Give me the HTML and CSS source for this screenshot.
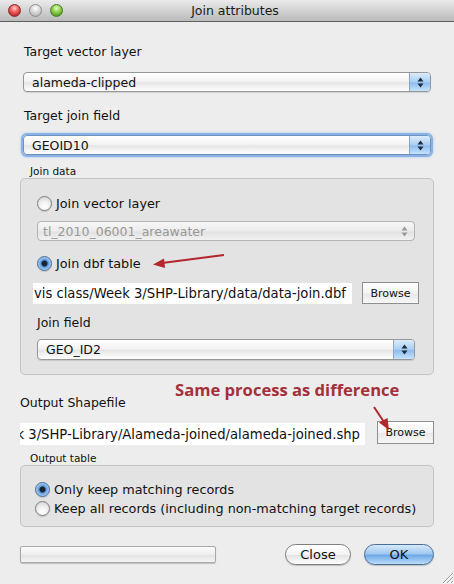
FILE: index.html
```html
<!DOCTYPE html>
<html>
<head>
<meta charset="utf-8">
<link rel="stylesheet" href="styles.css">
</head>
<body>
<div class="window">
  <div class="titlebar">
    <div class="lights">
      <span class="light red"></span>
      <span class="light grey"></span>
      <span class="light green"></span>
    </div>
    <div class="title">Join attributes</div>
    <div></div>
  </div>

  <div class="content">
    <div class="label">Target vector layer</div>
    <div class="combo c1">
      <span class="combo-text">alameda-clipped</span>
      <span class="stepper"><svg width="7" height="11" viewBox="0 0 7 11"><path d="M3.5 0.5 L6.5 4.5 L0.5 4.5Z M3.5 10.5 L6.5 6.5 L0.5 6.5Z" fill="#1d2a3a"/></svg></span>
    </div>

    <div class="label l2">Target join field</div>
    <div class="combo c2 focused">
      <span class="combo-text">GEOID10</span>
      <span class="stepper"><svg width="7" height="11" viewBox="0 0 7 11"><path d="M3.5 0.5 L6.5 4.5 L0.5 4.5Z M3.5 10.5 L6.5 6.5 L0.5 6.5Z" fill="#1d2a3a"/></svg></span>
    </div>

    <div class="small-label sl1">Join data</div>
    <div class="group g1">
      <div class="radio-row r1"><span class="radio"></span><span>Join vector layer</span></div>
      <div class="combo inner disabled">
        <span class="combo-text">tl_2010_06001_areawater</span>
        <span class="stepper"><svg width="7" height="11" viewBox="0 0 7 11"><path d="M3.5 0.5 L6.5 4.5 L0.5 4.5Z M3.5 10.5 L6.5 6.5 L0.5 6.5Z" fill="#9a9a9a"/></svg></span>
      </div>
      <div class="radio-row r2"><span class="radio on"></span><span>Join dbf table</span></div>
      <div class="file-row fr1">
        <div class="field f1"><span>vis class/Week 3/SHP-Library/data/data-join.dbf</span></div>
        <div class="button b1">Browse</div>
      </div>
      <div class="label inner-label">Join field</div>
      <div class="combo inner c3">
        <span class="combo-text">GEO_ID2</span>
        <span class="stepper"><svg width="7" height="11" viewBox="0 0 7 11"><path d="M3.5 0.5 L6.5 4.5 L0.5 4.5Z M3.5 10.5 L6.5 6.5 L0.5 6.5Z" fill="#1d2a3a"/></svg></span>
      </div>
    </div>

    <div class="label out-label">Output Shapefile</div>
    <div class="file-row fr2">
      <div class="field f2"><span>k 3/SHP-Library/Alameda-joined/alameda-joined.shp</span></div>
      <div class="button b2">Browse</div>
    </div>

    <div class="small-label sl2">Output table</div>
    <div class="group g2">
      <div class="radio-row r3"><span class="radio on"></span><span>Only keep matching records</span></div>
      <div class="radio-row r4"><span class="radio"></span><span>Keep all records (including non-matching target records)</span></div>
    </div>

    <div class="bottom">
      <div class="progress"></div>
      <div class="pill close">Close</div>
      <div class="pill ok">OK</div>
    </div>
  </div>

  <div class="note">Same process as difference</div>
  <svg class="arrows" width="454" height="584" viewBox="0 0 454 584">
    <line x1="224" y1="255" x2="162" y2="263" stroke="#b3262b" stroke-width="2"/>
    <path d="M153 264.5 L164 258.5 L165 268 Z" fill="#b3262b"/>
    <line x1="374" y1="407" x2="384" y2="422" stroke="#b3262b" stroke-width="2"/>
    <path d="M389 430 L379 422.5 L387.5 418 Z" fill="#b3262b"/>
  </svg>
  <svg class="grip" width="14" height="14" viewBox="0 0 14 14">
    <path d="M13 3 L3 13 M13 7 L7 13 M13 11 L11 13" stroke="#9a9a9a" stroke-width="1"/>
    <path d="M13 4 L4 13 M13 8 L8 13 M13 12 L12 13" stroke="#ffffff" stroke-width="1"/>
  </svg>
</div>
</body>
</html>
```

FILE: styles.css
```css
html, body {
  margin: 0;
  padding: 0;
}
body {
  background: #ededed;
}
.window {
  position: relative;
  width: 454px;
  height: 584px;
  overflow: hidden;
  background: #ededed;
  font-family: "DejaVu Sans", "Liberation Sans", sans-serif;
  font-size: 12.5px;
  color: #111;
}
.titlebar {
  height: 21px;
  border-bottom: 1px solid #5f5f5f;
  background: linear-gradient(#ebebeb, #d2d2d2 50%, #bababa);
  display: grid;
  grid-template-columns: 1fr auto 1fr;
  align-items: center;
}
.lights {
  display: flex;
  gap: 8px;
  padding-left: 8px;
}
.light {
  width: 13px;
  height: 13px;
  border-radius: 50%;
  box-sizing: border-box;
}
.light.red {
  background: radial-gradient(circle at 50% 30%, #ffd0d0 0, #f06060 40%, #b21818 90%);
  border: 1px solid #8a2a2a;
}
.light.grey {
  background: radial-gradient(circle at 50% 30%, #ffffff 0, #d8d8d8 45%, #a9a9a9 95%);
  border: 1px solid #8e8e8e;
}
.light.green {
  background: radial-gradient(circle at 50% 30%, #e2ffc6 0, #8fd14d 42%, #3d8a12 92%);
  border: 1px solid #4d7a2a;
}
.title {
  padding-left: 16px;
  font-size: 12.5px;
  color: #1a1a1a;
}
.content {
  padding: 22px 20px 0 20px;
}
.label {
  height: 16px;
  line-height: 16px;
  margin-left: 4px;
  white-space: nowrap;
}
.l2 { margin-top: 16px; }
.combo {
  box-sizing: border-box;
  display: flex;
  align-items: center;
  height: 20px;
  border: 1px solid #979797;
  border-radius: 4px;
  background: linear-gradient(#ffffff, #f3f3f3 45%, #e6e6e6 55%, #ffffff);
  overflow: hidden;
  box-shadow: 0 1px 1px rgba(0,0,0,0.12);
}
.combo-text {
  flex: 1;
  padding-left: 8px;
  white-space: nowrap;
}
.stepper {
  width: 20px;
  align-self: stretch;
  display: flex;
  align-items: center;
  justify-content: center;
  border-left: 1px solid #8aa6c4;
  background: linear-gradient(#dcecfb, #a8cdf2 50%, #8cbdee 55%, #c6e3fb);
}
.c1 {
  margin-top: 12px;
  margin-left: 3px;
  width: 408px;
}
.c2 {
  margin-top: 11px;
  margin-left: 3px;
  width: 408px;
}
.focused {
  border-color: #6f93c0;
  box-shadow: 0 0 0 2px #89b3e6, 0 0 3px 2px #a7c8ee;
}
.small-label {
  height: 13px;
  line-height: 13px;
  font-size: 10.5px;
  margin-left: 10px;
}
.sl1 { margin-top: 10px; }
.group {
  box-sizing: border-box;
  width: 414px;
  border: 1px solid #c4c4c4;
  border-radius: 5px;
  background: #e3e3e3;
  padding-left: 16px;
}
.g1 {
  height: 197px;
  padding-top: 15px;
}
.radio-row {
  display: flex;
  align-items: center;
  height: 18px;
  gap: 4px;
  font-size: 12.8px;
  white-space: nowrap;
}
.radio {
  box-sizing: border-box;
  width: 15px;
  height: 15px;
  border-radius: 50%;
  border: 1px solid #7e7e7e;
  background: radial-gradient(circle at 50% 75%, #ffffff 0, #f2f2f2 40%, #cfcfcf 100%);
  box-shadow: 0 1px 1px rgba(0,0,0,0.15);
}
.radio.on {
  border-color: #4b6b95;
  background: radial-gradient(circle at 50% 50%, #1a2433 0, #1a2433 2.5px, #5b97d9 3.5px, #8ebdee 60%, #d3e8fb 100%);
}
.inner {
  width: 378px;
}
.disabled {
  margin-top: 9px;
  border-color: #b3b3b3;
  color: #999;
  box-shadow: none;
  background: linear-gradient(#f7f7f7, #ececec 50%, #e2e2e2 55%, #f2f2f2);
}
.disabled .combo-text { padding-left: 5px; }
.disabled .stepper {
  border-left: none;
  background: transparent;
}
.r2 { margin-top: 13px; }
.file-row {
  display: flex;
  align-items: flex-start;
}
.fr1 {
  margin-top: 10px;
  margin-left: -4px;
  gap: 10px;
}
.field {
  box-sizing: border-box;
  background: #ffffff;
  display: flex;
  justify-content: flex-end;
  align-items: center;
  overflow: hidden;
  white-space: nowrap;
  font-size: 13.2px;
  padding-right: 6px;
}
.f1 {
  width: 319px;
  height: 21px;
  margin-top: 1px;
}
.button {
  box-sizing: border-box;
  width: 57px;
  height: 22px;
  border: 1px solid #8e8e8e;
  background: linear-gradient(#ffffff, #f3f3f3 50%, #e9e9e9 55%, #f7f7f7);
  font-size: 11px;
  display: flex;
  align-items: center;
  justify-content: center;
}
.inner-label {
  margin-top: 11px;
  margin-left: 0;
}
.c3 {
  margin-top: 8px;
  height: 21px;
}
.out-label {
  margin-top: 20px;
  margin-left: 0;
}
.fr2 {
  margin-top: 10px;
  gap: 12px;
}
.f2 {
  width: 345px;
  height: 22px;
  margin-top: 2px;
  padding-right: 5px;
}
.b2 {
  height: 23px;
}
.sl2 { margin-top: 7px; }
.g2 {
  height: 62px;
  padding-top: 14px;
  padding-left: 14px;
}
.r4 { margin-top: 1px; }
.bottom {
  margin-top: 17px;
  display: flex;
  align-items: flex-start;
}
.progress {
  box-sizing: border-box;
  width: 196px;
  height: 17px;
  margin-top: 2px;
  border: 1px solid #a8a8a8;
  border-radius: 2px;
  background: linear-gradient(#fbfbfb, #eeeeee 50%, #e2e2e2 55%, #f5f5f5);
  box-shadow: 0 1px 1px rgba(0,0,0,0.2);
}
.pill {
  box-sizing: border-box;
  height: 21px;
  border-radius: 11px;
  display: flex;
  align-items: center;
  justify-content: center;
  font-size: 13px;
  box-shadow: 0 1px 1px rgba(0,0,0,0.2);
}
.close {
  margin-left: 69px;
  width: 66px;
  border: 1px solid #7f7f7f;
  background: linear-gradient(#ffffff, #f4f4f4 50%, #e4e4e4 55%, #ffffff);
}
.ok {
  margin-left: 13px;
  width: 70px;
  border: 1px solid #4a6d98;
  background: linear-gradient(#d6e9fb, #a2c9f0 45%, #6fa9e6 55%, #b9ddfb);
}
.note {
  position: absolute;
  left: 175px;
  top: 378px;
  font-family: "Open Sans", Lato, sans-serif;
  font-weight: 700;
  font-size: 16.6px;
  color: #a3303a;
  white-space: nowrap;
}
.arrows {
  position: absolute;
  left: 0;
  top: 0;
  pointer-events: none;
}
.grip {
  position: absolute;
  right: 0;
  bottom: 0;
}
```
